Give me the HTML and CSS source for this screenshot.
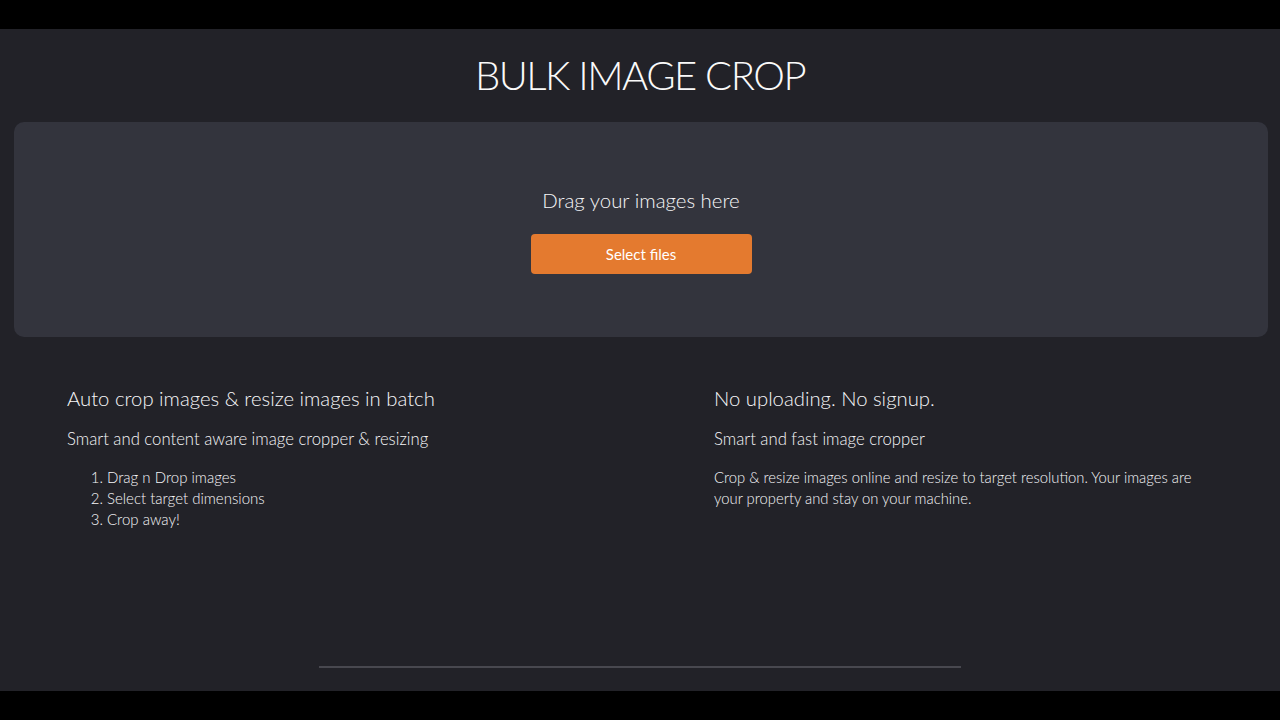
FILE: index.html
```html
<!DOCTYPE html>
<html>
<head>
<meta charset="utf-8">
<link rel="stylesheet" href="styles.css">
</head>
<body>
<div class="bar"></div>
<main class="page">
  <h1 class="title">BULK IMAGE CROP</h1>
  <section class="drop">
    <p class="drop-text">Drag your images here</p>
    <button class="btn">Select files</button>
  </section>
  <section class="info">
    <div class="col">
      <h2>Auto crop images &amp; resize images in batch</h2>
      <h3>Smart and content aware image cropper &amp; resizing</h3>
      <ol>
        <li>Drag n Drop images</li>
        <li>Select target dimensions</li>
        <li>Crop away!</li>
      </ol>
    </div>
    <div class="col">
      <h2>No uploading. No signup.</h2>
      <h3>Smart and fast image cropper</h3>
      <p>Crop &amp; resize images online and resize to target resolution. Your images are your property and stay on your machine.</p>
    </div>
  </section>
  <div class="spacer"></div>
  <hr class="rule">
</main>
<div class="bar bottom"></div>
</body>
</html>
```

FILE: styles.css
```css
html, body { margin: 0; padding: 0; }
body {
  background: #000;
  width: 1280px;
  height: 720px;
  overflow: hidden;
  font-family: Lato, "Open Sans", sans-serif;
  font-weight: 300;
  color: #f6f6f8;
  display: flex;
  flex-direction: column;
}
.bar { height: 29px; background: #000; flex: none; }
.bar.bottom { height: 29px; }
.page {
  flex: 1;
  background: #222228;
  display: flex;
  flex-direction: column;
}
.title {
  margin: 20px 0 0;
  height: 73px;
  text-align: center;
  font-weight: 300;
  font-size: 40px;
  line-height: 52px;
  letter-spacing: -1.5px;
  color: #fafafa;
}
.drop {
  margin: 0 12px 0 14px;
  height: 215px;
  background: #33343d;
  border-radius: 10px;
  display: flex;
  flex-direction: column;
  align-items: center;
  box-sizing: border-box;
  padding-top: 63px;
}
.drop-text {
  margin: 0;
  font-size: 20.4px;
  line-height: 30px;
}
.btn {
  margin-top: 19px;
  width: 221px;
  height: 40px;
  border: 0;
  border-radius: 4px;
  background: #e47a2f;
  color: #fff;
  font-family: Lato, sans-serif;
  font-weight: 400;
  font-size: 15px;
  padding-top: 1px;
}
.info {
  display: grid;
  grid-template-columns: 647px 1fr;
  padding: 47px 76px 0 67px;
}
.col h2 {
  margin: 0;
  font-weight: 300;
  font-size: 20.3px;
  line-height: 28px;
}
.col h3 {
  margin: 14px 0 0;
  font-weight: 300;
  font-size: 16.7px;
  line-height: 26px;
}
.col ol {
  margin: 15px 0 0;
  padding-left: 40px;
  font-size: 15px;
  line-height: 21px;
}
.col p {
  margin: 15px 0 0;
  font-size: 14.8px;
  line-height: 21px;
}
.spacer { flex: 1; }
.rule {
  margin: 0 auto 23px;
  width: 642px;
  height: 0;
  border: 0;
  border-top: 2px solid #48484f;
}
```
